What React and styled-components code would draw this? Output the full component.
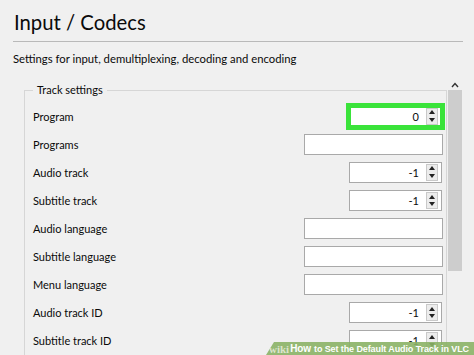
import React from "react";
import styled, { createGlobalStyle } from "styled-components";

const Global = createGlobalStyle`
  html, body { margin: 0; padding: 0; background: #f0f0f0; }
  body { width: 474px; height: 355px; overflow: hidden; font-family: "Lato", "Noto Sans", sans-serif; color: #111; }
`;

const Page = styled.div`
  position: relative;
  width: 474px;
  height: 355px;
  overflow: hidden;
  padding: 0 11px 0 13px;
  box-sizing: border-box;
`;

const Title = styled.h1`
  margin: 0;
  padding: 8px 0 6px 1px;
  height: 42px;
  box-sizing: border-box;
  font-size: 20.3px;
  font-weight: 400;
  color: #0a0a0a;
  border-bottom: 1px solid #b9b9b9;
  line-height: 28px;
`;

const Subtitle = styled.div`
  margin-top: 9px;
  font-size: 11.3px;
  line-height: 16px;
  color: #0a0a0a;
`;

const ScrollArea = styled.div`
  display: flex;
  margin-top: 12px;
`;

const Content = styled.div`
  flex: 1;
  padding: 3px 1px 0 11px;
`;

const Group = styled.fieldset`
  margin: 0;
  border: 1px solid #d6d6d6;
  border-bottom: none;
  padding: 4px 3px 0 8px;
  display: flex;
  flex-direction: column;
`;

const Legend = styled.legend`
  font-size: 11px;
  line-height: 16px;
  padding: 0 4px;
  margin-left: 0;
  color: #0a0a0a;
`;

const Row = styled.div`
  display: flex;
  align-items: center;
  justify-content: space-between;
  height: 28.1px;
  font-size: 11px;
  color: #0a0a0a;
`;

const TextField = styled.div`
  width: 139px;
  height: 21px;
  box-sizing: border-box;
  background: #fff;
  border: 1px solid #a9a9a9;
`;

const Spin = styled.div`
  width: 93px;
  height: 21px;
  box-sizing: border-box;
  background: #fff;
  border: 1px solid #a9a9a9;
  display: flex;
  align-items: center;
  justify-content: flex-end;
  padding-right: 3px;
  margin-right: 1px;
  outline: ${(p) => (p.$hl ? "5px solid #3ae33a" : "none")};
  outline-offset: -2px;
`;

const SpinValue = styled.span`
  font-size: 11px;
  color: #0a0a0a;
  margin-right: 7px;
`;

const SpinButtons = styled.div`
  width: 10px;
  height: 15px;
  border: 1px solid #c9c9c9;
  background: #ececec;
  display: flex;
  flex-direction: column;
  align-items: center;
  justify-content: space-around;
`;

const Tri = styled.span`
  width: 0;
  height: 0;
  border-left: 3px solid transparent;
  border-right: 3px solid transparent;
  ${(p) => (p.$up ? "border-bottom: 4px solid #222;" : "border-top: 4px solid #222;")}
`;

const Scrollbar = styled.div`
  width: 14px;
  margin-right: 1px;
  display: flex;
  flex-direction: column;
  align-items: center;
`;

const ScrollArrow = styled.div`
  height: 11px;
  width: 14px;
  display: flex;
  align-items: center;
  justify-content: center;
`;

const Thumb = styled.div`
  width: 14px;
  height: 181px;
  background: #cdcdcd;
`;

const Banner = styled.div`
  position: absolute;
  right: 0;
  bottom: 0;
  width: 208px;
  height: 13px;
  background: rgba(139, 179, 102, 0.9);
  clip-path: polygon(8px 0, 100% 0, 100% 100%, 0 100%);
  display: flex;
  align-items: center;
  padding-left: 3px;
  box-sizing: border-box;
  font-family: "Liberation Sans", Arial, sans-serif;
  font-weight: 700;
  font-size: 9px;
  letter-spacing: -0.1px;
  color: #fff;
  white-space: nowrap;
`;

const Wiki = styled.span`
  color: #dce4cc;
  font-family: "Liberation Serif", serif;
  font-size: 11px;
  letter-spacing: 0;
  margin-right: 1px;
`;

const How = styled.span`
  font-size: 10px;
  margin-right: 3px;
`;

const rows = [
  { label: "Program", type: "spin", value: "0", hl: true },
  { label: "Programs", type: "text" },
  { label: "Audio track", type: "spin", value: "-1" },
  { label: "Subtitle track", type: "spin", value: "-1" },
  { label: "Audio language", type: "text" },
  { label: "Subtitle language", type: "text" },
  { label: "Menu language", type: "text" },
  { label: "Audio track ID", type: "spin", value: "-1" },
  { label: "Subtitle track ID", type: "spin", value: "-1" },
];

export default function App() {
  return (
    <>
      <Global />
      <Page>
        <Title>Input / Codecs</Title>
        <Subtitle>Settings for input, demultiplexing, decoding and encoding</Subtitle>
        <ScrollArea>
          <Content>
            <Group>
              <Legend>Track settings</Legend>
              {rows.map((r) => (
                <Row key={r.label}>
                  <span>{r.label}</span>
                  {r.type === "text" ? (
                    <TextField />
                  ) : (
                    <Spin $hl={r.hl}>
                      <SpinValue>{r.value}</SpinValue>
                      <SpinButtons>
                        <Tri $up />
                        <Tri />
                      </SpinButtons>
                    </Spin>
                  )}
                </Row>
              ))}
            </Group>
          </Content>
          <Scrollbar>
            <ScrollArrow>
              <svg width="8" height="6" viewBox="0 0 8 6">
                <path d="M1 5 L4 1.5 L7 5" fill="none" stroke="#333" strokeWidth="1.4" />
              </svg>
            </ScrollArrow>
            <Thumb />
          </Scrollbar>
        </ScrollArea>
        <Banner>
          <Wiki>wiki</Wiki>
          <How>How</How>
          to Set the Default Audio Track in VLC
        </Banner>
      </Page>
    </>
  );
}
